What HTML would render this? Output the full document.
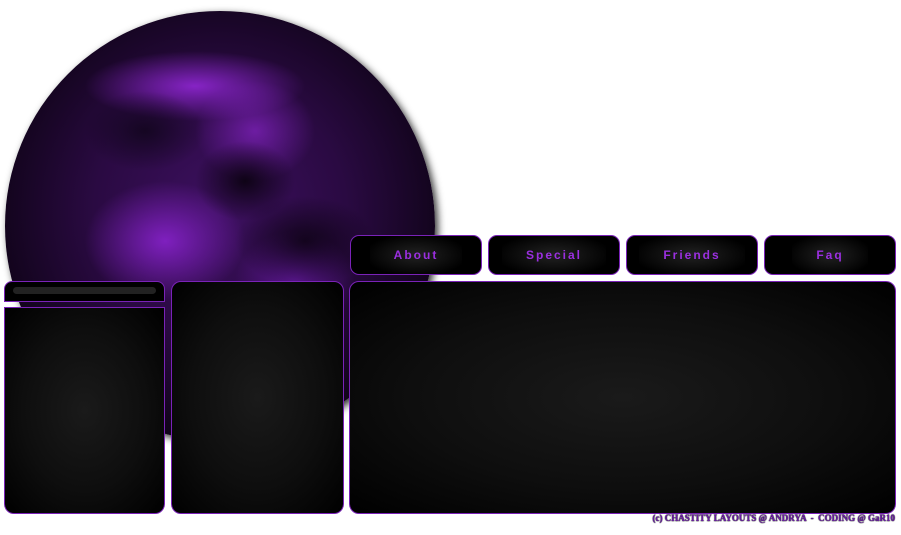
<!DOCTYPE html>
<html><head><style>
body{margin:0;width:901px;height:535px;background:#fff;position:relative;overflow:hidden;font-family:"Liberation Sans",sans-serif}
.moon{position:absolute;left:5px;top:11px;width:430px;height:430px;border-radius:50%;
background:
radial-gradient(ellipse 50px 40px at 240px 170px,rgba(10,2,15,.9),transparent),
radial-gradient(ellipse 60px 40px at 140px 120px,rgba(15,5,25,.8),transparent),
radial-gradient(ellipse 70px 45px at 300px 230px,rgba(10,2,15,.8),transparent),
radial-gradient(ellipse 110px 35px at 190px 75px,rgba(150,40,220,.85),transparent),
radial-gradient(ellipse 60px 50px at 250px 120px,rgba(150,40,220,.6),transparent),
radial-gradient(ellipse 80px 60px at 160px 230px,rgba(140,35,210,.85),transparent),
radial-gradient(ellipse 60px 50px at 290px 270px,rgba(120,30,190,.6),transparent),
radial-gradient(circle at 215px 200px,#3d1060 0%,#2a0a42 40%,#12041c 70%,#030105 92%,#000 100%);
box-shadow:3px 3px 8px rgba(0,0,0,.8)}
.p{position:absolute;background:radial-gradient(ellipse at center,#1a1a1a 0%,#0e0e0e 55%,#000 100%);border:1px solid #7a22b8;border-radius:10px;box-sizing:border-box}
.nav{position:absolute;top:235px;height:40px;width:132px;background:#000;border:1px solid #7a22b8;border-radius:9px;box-sizing:border-box;color:#9b2fe0;font-size:12px;font-weight:bold;letter-spacing:2px;text-align:center;line-height:38px}
.nav span{display:inline-block;background:radial-gradient(ellipse,#222 0%,#000 80%);padding:0 24px}
.ft{position:absolute;right:6px;top:513px;font-family:"Liberation Serif",serif;font-size:9px;font-weight:bold;color:#6a1aa8;text-shadow:0 0 1px #000,0 0 1px #000}
</style></head><body>
<div class="moon"></div>
<div class="nav" style="left:350px"><span>About</span></div>
<div class="nav" style="left:488px"><span>Special</span></div>
<div class="nav" style="left:626px"><span>Friends</span></div>
<div class="nav" style="left:764px"><span>Faq</span></div>
<div class="p" style="left:4px;top:281px;width:161px;height:21px;border-radius:8px 8px 0 0;background:#000"><div style="margin:5px 8px;height:7px;background:#222;border-radius:4px"></div></div>
<div class="p" style="left:4px;top:307px;width:161px;height:207px;border-radius:0 0 10px 10px"></div>
<div class="p" style="left:171px;top:281px;width:173px;height:233px"></div>
<div class="p" style="left:349px;top:281px;width:547px;height:233px"></div>
<div class="ft">(c) CHASTITY LAYOUTS @ ANDRYA &nbsp;- &nbsp;CODING @ GaR10</div>
</body></html>
